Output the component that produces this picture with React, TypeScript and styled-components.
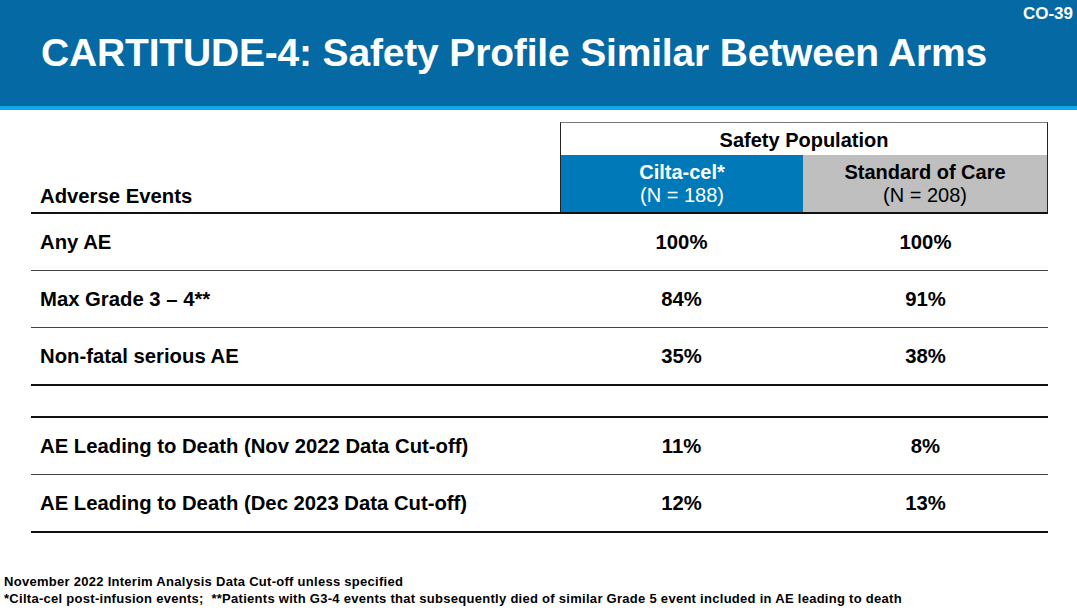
import React from "react";
import styled, { createGlobalStyle } from "styled-components";

const GlobalStyle = createGlobalStyle`
  html, body {
    margin: 0;
    padding: 0;
    background: #ffffff;
  }
  body {
    font-family: "Liberation Sans", Arial, sans-serif;
    color: #000000;
  }
`;

const rows = [
  { label: "Any AE", cilta: "100%", soc: "100%", line: "thin" },
  { label: "Max Grade 3 – 4**", cilta: "84%", soc: "91%", line: "thin" },
  { label: "Non-fatal serious AE", cilta: "35%", soc: "38%", line: "thick" },
  { label: "", cilta: "", soc: "", line: "thick", spacer: true },
  { label: "AE Leading to Death (Nov 2022 Data Cut-off)", cilta: "11%", soc: "8%", line: "thin" },
  { label: "AE Leading to Death (Dec 2023 Data Cut-off)", cilta: "12%", soc: "13%", line: "thick" },
];

const App = () => {
  return (
    <Page>
      <GlobalStyle />
      <Header>
        <Title>CARTITUDE-4: Safety Profile Similar Between Arms</Title>
        <SlideNo>CO-39</SlideNo>
      </Header>

      <Table>
        <GroupRow>
          <span />
          <GroupCell>Safety Population</GroupCell>
        </GroupRow>
        <HeadRow>
          <HeadLabel>Adverse Events</HeadLabel>
          <ArmCell $tone="blue">
            <strong>Cilta-cel*</strong>
            <span>(N = 188)</span>
          </ArmCell>
          <ArmCell $tone="gray">
            <strong>Standard of Care</strong>
            <span>(N = 208)</span>
          </ArmCell>
        </HeadRow>
        {rows.map((r, i) => (
          <Row key={i} $line={r.line} $spacer={!!r.spacer}>
            <Label>{r.label}</Label>
            <Value>{r.cilta}</Value>
            <Value>{r.soc}</Value>
          </Row>
        ))}
      </Table>

      <Footnotes>
        <p>November 2022 Interim Analysis Data Cut-off unless specified</p>
        <p>
          *Cilta-cel post-infusion events;&nbsp; **Patients with G3-4 events that subsequently died of
          similar Grade 5 event included in AE leading to death
        </p>
      </Footnotes>
    </Page>
  );
};

export default App;

const Page = styled.div`
  width: 1077px;
  height: 611px;
  overflow: hidden;
  display: flex;
  flex-direction: column;
`;

const Header = styled.header`
  position: relative;
  height: 110px;
  box-sizing: border-box;
  background: #0569a3;
  border-bottom: 4px solid #10a8ea;
  display: flex;
  align-items: center;
  padding-left: 41px;
`;

const Title = styled.h1`
  margin: 0;
  color: #ffffff;
  font-size: 39px;
  font-weight: bold;
  letter-spacing: -0.17px;
`;

const SlideNo = styled.div`
  position: absolute;
  top: 4px;
  right: 4px;
  color: #ffffff;
  font-size: 17px;
  font-weight: bold;
`;

const Table = styled.div`
  margin: 12px 29px 0 31px;
  display: flex;
  flex-direction: column;
`;

const cols = "529px 243px 245px";

const GroupRow = styled.div`
  display: grid;
  grid-template-columns: 529px 488px;
`;

const GroupCell = styled.div`
  height: 33px;
  border: 1px solid #222;
  border-top-color: #7a7a7a;
  border-bottom: none;
  display: flex;
  align-items: center;
  justify-content: center;
  font-size: 20px;
  font-weight: bold;
  padding-top: 2px;
  box-sizing: border-box;
`;

const HeadRow = styled.div`
  display: grid;
  grid-template-columns: ${cols};
  height: 59px;
  border-bottom: 2px solid #111;
  box-sizing: border-box;
`;

const HeadLabel = styled.div`
  display: flex;
  align-items: flex-end;
  padding-left: 9px;
  padding-bottom: 4px;
  font-size: 20.3px;
  font-weight: bold;
`;

const ArmCell = styled.div<{ $tone: "blue" | "gray" }>`
  background: ${(p) => (p.$tone === "blue" ? "#0079b9" : "#bfbfbf")};
  color: ${(p) => (p.$tone === "blue" ? "#ffffff" : "#000000")};
  border-left: ${(p) => (p.$tone === "blue" ? "1px solid #222" : "none")};
  border-right: ${(p) => (p.$tone === "gray" ? "1px solid #222" : "none")};
  display: flex;
  flex-direction: column;
  align-items: center;
  justify-content: center;
  font-size: 20px;
  line-height: 23px;

  strong {
    font-weight: bold;
  }
  span {
    font-weight: normal;
  }
`;

const Row = styled.div<{ $line: string; $spacer: boolean }>`
  display: grid;
  grid-template-columns: ${cols};
  height: ${(p) => (p.$spacer ? "32px" : p.$line === "thick" ? "58px" : "57px")};
  border-bottom: ${(p) => (p.$line === "thick" ? "2px solid #111" : "1px solid #444")};
  box-sizing: border-box;
  align-items: center;
  font-size: 20.3px;
  font-weight: bold;
`;

const Label = styled.div`
  padding-left: 9px;
`;

const Value = styled.div`
  text-align: center;
`;

const Footnotes = styled.div`
  margin-top: 40px;
  padding-left: 4px;
  font-family: "Liberation Sans Narrow", "Arial Narrow", "Liberation Sans", sans-serif;
  font-size: 13px;
  font-weight: bold;
  letter-spacing: 0.28px;
  line-height: 17px;

  p {
    margin: 0;
  }
`;
